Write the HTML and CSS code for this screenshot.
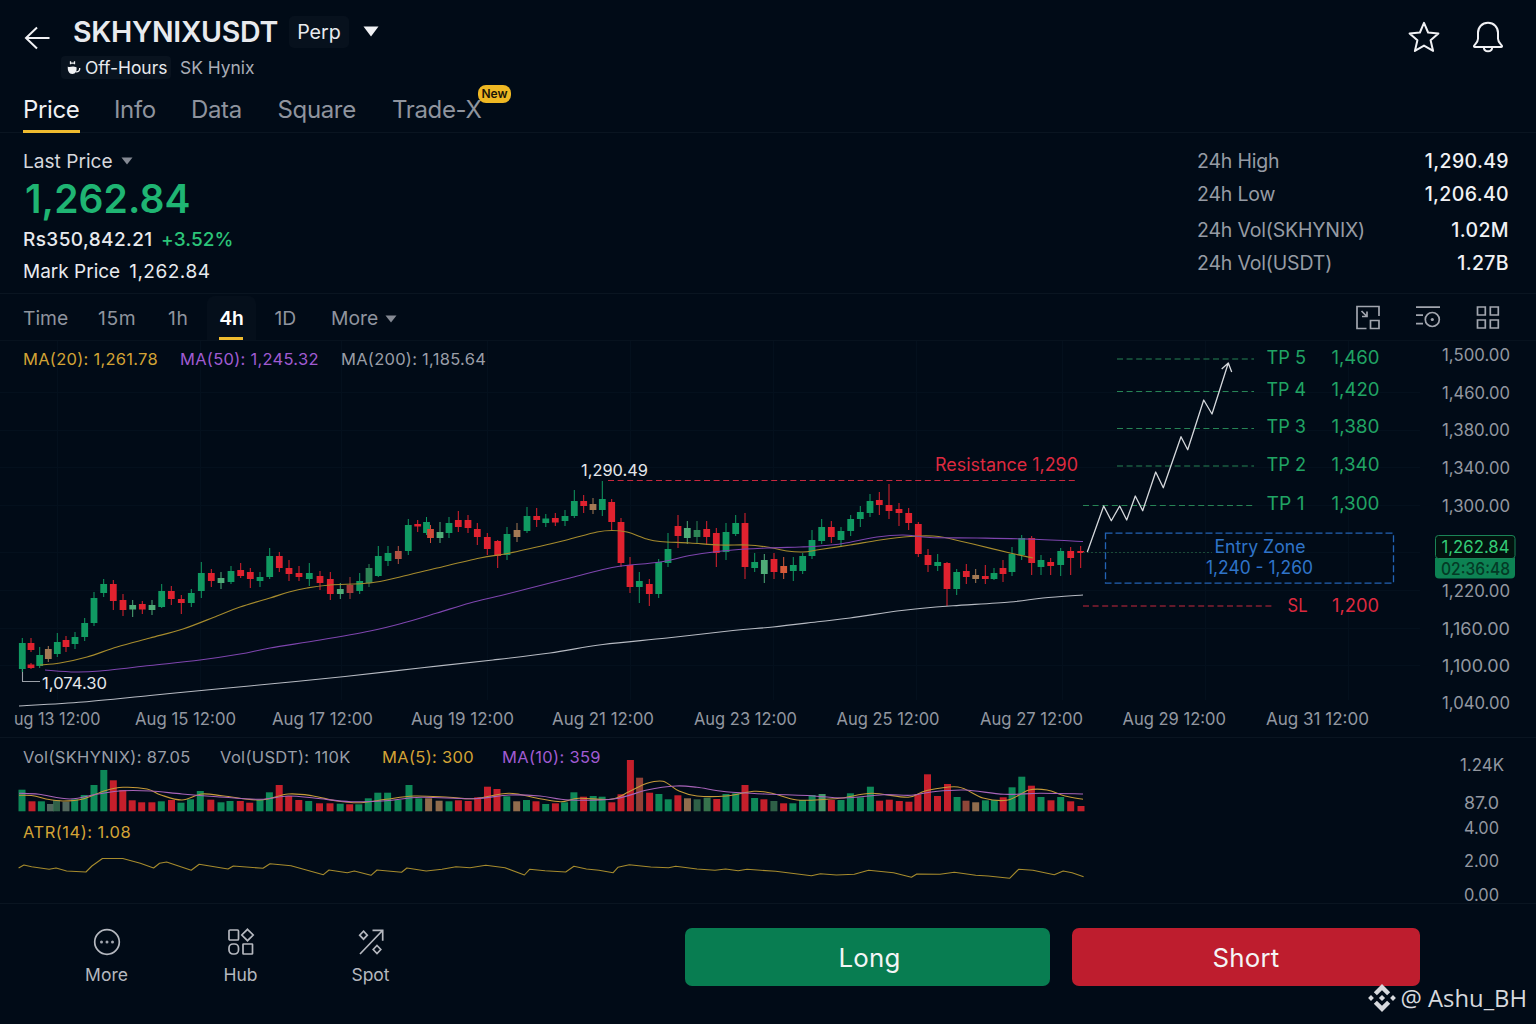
FILE: index.html
```html
<!DOCTYPE html>
<html lang="en">
<head>
<meta charset="utf-8">
<title>SKHYNIXUSDT Perp</title>
<link rel="stylesheet" href="styles.css">
</head>
<body>
<header class="header">
  <svg class="back" width="26" height="24" viewBox="0 0 26 24"><path d="M13 1.500 2 12l11 10.500M2 12h23.500"/></svg>
  <div class="pair">
    <div class="pair-main">
      <h1 class="symbol">SKHYNIXUSDT</h1>
      <span class="perp">Perp</span>
      <svg class="caret" width="16" height="11" viewBox="0 0 16 11"><path d="M.5.5h15L8 10.500z"/></svg>
    </div>
    <div class="pair-sub">
      <span class="session">
        <svg width="14" height="15" viewBox="0 0 14 15"><path class="cup" d="M.8 6.500c2 1.500 4.200-1 8.700.8.500 4-1 6.700-4.200 6.700S.4 10.600.8 6.500z"/><path class="cup-line" d="M9 11.800c2.300.2 4-1.300 3.700-3.800M3.500 1.200v3M7.500 1.200v3M3.500 3.200h4"/></svg>
        <span>Off-Hours</span>
      </span>
      <span class="company">SK Hynix</span>
    </div>
  </div>
  <div class="header-actions">
    <svg width="32" height="32" viewBox="0 0 32 32"><path d="m16 1.800 4.100 9.700 10.300.9-7.800 6.900 2.500 10.600L16 24.600l-9.100 5.300 2.500-10.600-7.800-6.900 10.300-.9z"/></svg>
    <svg width="32" height="32" viewBox="0 0 32 32"><path d="M16 1.800c-6 0-10 4.400-10 10v6c0 3-2.300 4.800-3.800 6.900-.5.700-.2 1.300.7 1.300h26.200c.9 0 1.200-.6.7-1.300-1.500-2.100-3.800-3.900-3.800-6.900v-6c0-5.600-4-10-10-10zM11.800 26.500c.4 5 8 5 8.400 0"/></svg>
  </div>
</header>

<nav class="tabs">
  <a class="tab active">Price</a><a class="tab">Info</a><a class="tab">Data</a><a class="tab">Square</a>
  <a class="tab tradex">Trade-X<span class="badge">New</span></a>
</nav>

<section class="summary">
  <div class="price">
    <div class="last-label">Last Price <svg width="12" height="8" viewBox="0 0 12 8"><path d="M.5.5h11L6 7.500z"/></svg></div>
    <div class="last">1,262.84</div>
    <div class="fiat"><span>Rs350,842.21</span><span class="change">+3.52%</span></div>
    <div class="mark"><span>Mark Price</span><span class="num">1,262.84</span></div>
  </div>
  <dl class="stats">
    <dt>24h High</dt><dd>1,290.49</dd>
    <dt>24h Low</dt><dd>1,206.40</dd>
    <dt>24h Vol(SKHYNIX)</dt><dd>1.02M</dd>
    <dt>24h Vol(USDT)</dt><dd>1.27B</dd>
  </dl>
</section>

<nav class="intervals">
  <div class="interval-list">
    <a>Time</a><a class="wide">15m</a><a class="wide">1h</a><a class="on">4h</a><a>1D</a>
    <a class="more">More <svg width="12" height="8" viewBox="0 0 12 8"><path d="M.5.5h11L6 7.500z"/></svg></a>
  </div>
  <div class="tools">
    <svg width="26" height="26" viewBox="0 0 26 26"><path d="M24 11V1.500H2v22h9.500M15.500 15.500H24v8h-8.500zM6.500 6l5.500 5.500M12 6.500v5H7"/></svg>
    <svg width="26" height="26" viewBox="0 0 26 26"><path d="M1 2.200h24M1 10.200h7M1 18.700h7"/><circle cx="17.300" cy="14.500" r="7"/><circle class="dot" cx="17.300" cy="14.500" r="1.600"/></svg>
    <svg width="26" height="26" viewBox="0 0 26 26"><path d="M2.500 2h7.800v8H2.500zM15.300 2h8v8h-8zM2.500 15h7.800v8H2.500zM15.300 15h8v8h-8z"/></svg>
  </div>
</nav>

<section class="panel main-chart">
  <svg id="chart" width="1536" height="397" viewBox="0 341 1536 397"></svg>
  <div class="legend">
    <span class="y">MA(20): 1,261.78</span><span class="p">MA(50): 1,245.32</span><span>MA(200): 1,185.64</span>
  </div>
</section>

<section class="panel sub-chart">
  <svg id="sub" width="1536" height="165" viewBox="0 738 1536 165"></svg>
  <div class="legend vol-legend">
    <span>Vol(SKHYNIX): 87.05</span><span>Vol(USDT): 110K</span><span class="y">MA(5): 300</span><span class="p">MA(10): 359</span>
  </div>
  <div class="legend atr-legend"><span class="y">ATR(14): 1.08</span></div>
</section>

<footer class="footer">
  <nav class="shortcuts">
    <a><svg width="28" height="28" viewBox="0 0 28 28"><circle cx="14" cy="14" r="12.300"/><circle class="dot" cx="8.500" cy="14" r="1.500"/><circle class="dot" cx="14" cy="14" r="1.500"/><circle class="dot" cx="19.500" cy="14" r="1.500"/></svg>More</a>
    <a><svg width="28" height="28" viewBox="0 0 28 28"><rect x="2" y="2" width="9.500" height="10" rx="1"/><path d="m20.500 1.300 5.700 5.700-5.700 5.700L14.800 7z"/><rect x="2" y="16" width="9.500" height="10" rx="4"/><rect x="16" y="16" width="9.500" height="10" rx=".5"/></svg>Hub</a>
    <a><svg width="28" height="28" viewBox="0 0 28 28"><path d="M3 26 25.500 2.500M15.500 2.300h10.200v10.500M6.500 3.200l3.800 4-3.800 4-3.800-4zM20 17.500l3.800 4-3.800 4-3.800-4z"/></svg>Spot</a>
  </nav>
  <button class="btn long">Long</button>
  <button class="btn short">Short</button>
  <div class="credit">
    <svg width="28" height="28" viewBox="0 0 28 28"><path d="m14 0 8.200 8.200-3.100 3.100L14 6.200l-5.100 5.100-3.100-3.100zM14 28l8.200-8.200-3.100-3.100-5.100 5.100-5.100-5.100-3.100 3.100zM14 10.900l3.100 3.100-3.100 3.100-3.100-3.100zM3 11.100 5.900 14 3 16.900.1 14zM25 11.100l2.900 2.900-2.900 2.900-2.900-2.900z"/></svg>
    <span>@ Ashu_BH</span>
  </div>
</footer>
<script src="chart.js"></script>
</body>
</html>
```
FILE: styles.css
```css
* { box-sizing: border-box; }
body {
  margin: 0;
  width: 1536px;
  height: 1024px;
  overflow: hidden;
  display: flex;
  flex-direction: column;
  background: #010b17;
  color: #e8eaee;
  font-family: Inter, "Liberation Sans", sans-serif;
}
svg { display: block; flex: none; }
a { color: inherit; text-decoration: none; }

.header { height: 84px; display: flex; padding: 14px 32px 0 24px; }
.back { margin-top: 12px; fill: none; stroke: #f0f1f4; stroke-width: 2; }
.pair { margin-left: 11px; }
.pair-main { display: flex; align-items: center; height: 35px; padding-left: 12px; }
.symbol { margin: 0; width: 216px; font-size: 28.500px; line-height: 35px; font-weight: 600; letter-spacing: -.3px; white-space: nowrap; }
.perp { width: 60px; height: 32px; line-height: 32px; margin-top: 1px; border-radius: 5px; background: #07111d; font-size: 19.700px; text-align: center; }
.caret { margin-left: 14px; fill: #f0f1f4; }
.pair-sub { display: flex; align-items: center; margin-top: 7px; height: 23px; font-size: 17.400px; }
.session { display: flex; align-items: center; gap: 4px; width: 110px; height: 23px; padding-left: 6px; background: #09131f; border-radius: 4px; white-space: nowrap; }
.cup { fill: #f0f1f4; }
.cup-line { fill: none; stroke: #f0f1f4; stroke-width: 1.300; }
.company { margin-left: 9px; color: #a9adb6; }
.header-actions { margin-left: auto; display: flex; gap: 32px; margin-top: 7px; fill: none; stroke: #f0f1f4; stroke-width: 2; stroke-linejoin: round; }

.tabs { height: 49px; flex: none; display: grid; grid-template-columns: 91px 77px 86.500px 114.500px 100px; justify-content: start; padding-left: 23px; border-bottom: 1px solid #0a1521; font-size: 24px; letter-spacing: -.35px; line-height: 51px; color: #8f949e; }
.tab { justify-self: start; height: 49px; white-space: nowrap; }
.active { color: #f0f1f4; border-bottom: 3px solid #efbb2f; }
.tradex { position: relative; }
.badge { position: absolute; left: 86px; top: 1px; width: 33px; height: 18px; border-radius: 8px; background: #efb823; color: #1b1508; font-size: 12px; letter-spacing: 0; line-height: 18px; font-weight: 600; text-align: center; }

.summary { height: 161px; flex: none; display: flex; justify-content: space-between; padding: 14px 27px 0 23px; border-bottom: 1px solid #0a1521; }
.last-label { display: flex; align-items: center; gap: 8px; height: 28px; font-size: 19.100px; color: #d6d8dd; }
.last-label svg, .more svg { fill: #858a94; }
.last { height: 48px; padding-left: 2px; line-height: 47px; font-size: 39px; font-weight: 600; color: #1fb573; letter-spacing: .1px; }
.fiat { display: flex; gap: 8.500px; height: 33px; line-height: 34px; font-size: 19px; font-weight: 500; letter-spacing: .4px; }
.change { color: #2cc479; letter-spacing: .1px; }
.mark { display: flex; gap: 9px; height: 32px; line-height: 32px; font-size: 19px; }
.num { letter-spacing: .5px; }
.stats { margin: 0; width: 312px; display: grid; grid-template-columns: auto auto; grid-template-rows: 28px 38px 33px 34px; align-items: center; font-size: 19.500px; }
.stats dt { color: #969ba4; letter-spacing: -.18px; }
.stats dd { margin: 0; text-align: right; font-weight: 500; color: #f0f1f4; letter-spacing: .35px; }

.intervals { height: 47px; flex: none; display: flex; justify-content: space-between; padding: 2px 35px 0 23px; border-bottom: 1px solid #07121e; font-size: 19.300px; line-height: 45px; color: #8f949e; }
.interval-list { display: grid; grid-template-columns: 75px 70px 39px 67.500px 56.500px 80px; }
.interval-list .wide { letter-spacing: .6px; }
.interval-list .on { width: 49px; height: 44px; text-align: center; color: #fff; font-weight: 600; background: linear-gradient(#efbb2f, #efbb2f) 12px 41px / 24px 3px no-repeat #050f1b; border-radius: 8px 8px 0 0; }
.interval-list .more { display: flex; align-items: center; gap: 7px; }
.tools { display: flex; align-items: center; gap: 34px; fill: none; stroke: #a2a6af; stroke-width: 1.700; }
.dot { fill: #a2a6af; stroke: none; }

.panel { position: relative; flex: none; border-bottom: 1px solid #0a1521; }
.main-chart { height: 397px; }
.sub-chart { height: 166px; }
.legend { position: absolute; left: 23px; top: 6px; display: grid; grid-template-columns: 157px 161px 160px; font-size: 16.500px; letter-spacing: .28px; line-height: 24px; color: #9a9ea7; white-space: nowrap; }
.vol-legend { top: 7px; grid-template-columns: 197px 162px 120px 110px; letter-spacing: .33px; }
.atr-legend { top: 82px; letter-spacing: .5px; }
.y { color: #d3a335; }
.p { color: #a05bd2; }

.grid { stroke: #04101d; }
.wick { stroke-width: 1; }
.line { fill: none; stroke-width: 1.100; stroke-linejoin: round; }
.s-yellow { stroke: #a68b2d; }
.s-purple { stroke: #7e45ae; }
.s-white { stroke: #b6bac2; }
.s-path { stroke: #d5d8dc; stroke-width: 1.300; }
.s-low { stroke: #9ba0a8; }
.dash-green { stroke: #278455; stroke-dasharray: 6 3.600; }
.dash-red { stroke: #c8283f; stroke-dasharray: 6 3.600; }
.dash-price { stroke: #1a4a37; stroke-dasharray: 2 2; }
.entry { fill: none; stroke: #2363b5; stroke-width: 1.300; stroke-dasharray: 7 3; }
.axis { fill: #9297a0; font-size: 17px; }
.t-white { fill: #e4e6ea; font-size: 16.500px; }
.t-green { fill: #20a464; font-size: 18.500px; }
.t-red { fill: #dd293f; font-size: 18px; }
.t-blue { fill: #2f74c9; font-size: 18px; }
.t-now { fill: #34cc77; font-size: 17px; }
.t-count { fill: #043a26; font-size: 17px; font-weight: 500; }
.now-box { fill: #02130f; stroke: #1a8456; }
.now-fill { fill: #0d8253; }

.footer { position: relative; height: 120px; display: flex; padding: 23px 0 0 39.500px; }
.shortcuts { display: grid; grid-template-columns: 134px 134px 126px; width: 645.500px; padding-top: 1px; font-size: 17.500px; line-height: 24px; color: #b5b8bf; }
.shortcuts a { display: flex; flex-direction: column; align-items: center; gap: 7px; fill: none; stroke: #b5b8bf; stroke-width: 1.700; }
.btn { flex: none; height: 58px; margin-top: 1px; padding: 0; border: 0; border-radius: 7px; color: #f4f5f6; font: 400 25.800px Inter, sans-serif; letter-spacing: .2px; }
.long { width: 365px; padding-left: 4px; background: #087d51; }
.short { width: 348px; margin-left: 22px; background: #be1d2e; }
.credit { position: absolute; right: 9px; bottom: 10px; display: flex; align-items: center; gap: 5px; height: 32px; color: #d7d9dd; fill: #d7d9dd; font: 23.800px/32px "Open Sans", "Noto Sans", sans-serif; white-space: nowrap; }
```
FILE: chart.js
```js
const NS = 'http://www.w3.org/2000/svg';
const G = '#109a62', R = '#e0222f', L = '#4fac78', T = '#a47a55';

function add(parent, name, attrs, text) {
  const el = document.createElementNS(NS, name);
  for (const k in attrs) el.setAttribute(k, attrs[k]);
  if (text !== undefined) el.textContent = text;
  parent.appendChild(el);
  return el;
}

// Smooth path through points given as a flat x,y list.
function curve(n) {
  const p = [];
  for (let i = 0; i < n.length; i += 2) p.push([n[i], n[i + 1]]);
  let d = 'M' + p[0];
  for (let i = 0; i < p.length - 1; i++) {
    const a = p[i - 1] || p[i], b = p[i], c = p[i + 1], e = p[i + 2] || c;
    d += 'C' + [b[0] + (c[0] - a[0]) / 6, b[1] + (c[1] - a[1]) / 6, c[0] - (e[0] - b[0]) / 6, c[1] - (e[1] - b[1]) / 6, c[0], c[1]].join(' ');
  }
  return d;
}

function straight(n) {
  let d = '';
  for (let i = 0; i < n.length; i += 2) d += (i ? 'L' : 'M') + n[i] + ' ' + n[i + 1];
  return d;
}

function label(svg, cls, x, y, w, text) {
  add(svg, 'text', { class: cls, x, y, textLength: w, lengthAdjust: 'spacingAndGlyphs' }, text);
}

const chart = document.getElementById('chart');
const sub = document.getElementById('sub');

for (const x of [57, 200, 341, 487, 630, 773, 916, 1062, 1205, 1348]) add(chart, 'path', { class: 'grid', d: `M${x}.500 341V700` });
for (const y of [392, 430, 467, 505, 552, 590, 628, 665]) add(chart, 'path', { class: 'grid', d: `M0 ${y}.500H1420` });

add(chart, 'path', { class: 'line s-low', d: 'M22.500 668V681.500H40' });

// x, high, body top, body bottom, low, colour
const candles = [
  [22.3,638,643,669,672,G],[31,638,643,650,652,R],[31,663,664.5,668,669,R],[39.7,647,655,666,668,G],[48.3,646,649,659,662,T],
  [57.3,633,642,654,657,G],[66,636,640,647,652,R],[75,632,637,644,649,G],[84.7,618,623,637,641,G],[94,592,598,623,626,G],
  [103.7,579,584,593,597,G],[113.3,580,584,601,610,R],[123,594,600,610,616,R],[132.7,600,605,609.5,617,L],[142.3,601,604,609.5,614,R],
  [152,600,605,610,615,L],[161.7,584,591,607,608,G],[171.3,586,591,599,605,R],[181.3,595,599,603,614,R],[191.3,589,593,603,607,G],
  [201.3,562,573,591,598,G],[211.3,569,573,581,587,R],[221,572,578,583,589,L],[231,566,571,582,584,G],[240.7,563,570,576,578,R],
  [250.3,568,572,579,588,R],[260,572,577,581,587,G],[269.7,548,556,577,579,G],[279.3,552,556,568,572,R],[289,560,568,574,581,R],
  [299,566,573,577,581,R],[309.3,563,573,579,586,G],[320,571,576,583,590,R],[330.3,572,579,594,600,R],[340.3,583,589,594,599,L],
  [350,577,585,593,599,'#a83a3a'],[359.7,573,581,591,594,G],[369,564,568,583,587,'#2d8456'],[378.3,546,556,576,577,G],[388,546,553,561,566,G],
  [398.3,546,551,559,564,'#b25344'],[408.3,519,525,551,555,G],[417.7,520,524,526.5,532,R],[426.5,517,522,533,535,G],[430.5,525,529,538,543,'#cf4a38'],
  [440,522,532,538,543,L],[449,517,523,533,538,G],[458.3,511,520,527,532,R],[468,515,520,528,533,R],[477.3,523,529,537,545,R],
  [487.3,533,537,549,555,R],[497.7,540,541,556,568,R],[507,527,534,555,560,G],[517,523,530,537,542,T],[527,507,516,531,533,G],
  [536.7,508,516,520,527,R],[545.8,514,518.5,523,527,G],[555.3,513,518,522.5,526,R],[565,510,516,521,526,G],[574.3,490,501,516,518,G],
  [583.7,495,501,506,513,R],[593,498,504,510,514,T],[602.3,481,499,510,516,G],[611.7,499,502,522,530,R],[621,518,522,563,567,R],
  [630,557,565,587,593,R],[639.3,572,581,587,603,G],[649.3,579,584,594,606,R],[658.7,559,562,594,598,G],[668,533,549,563,567,G],
  [678,515,526,536,548,R],[687.3,521,528,538,544,L],[697,521,530,537,544,'#2d8456'],[706.7,521,529,537,545,R],[716.3,528,533,553,567,R],
  [726,523,532,552,560,G],[735.7,515,523,534,536,G],[745,513,523,567,579,R],[754.7,553,562,568,572,G],[764.3,554,560,574,583,L],
  [774,553,559,572,579,R],[783.7,557,566,573,579,'#d65a3a'],[793.3,557,565,571,581,G],[802.7,553,556,571,574,G],[812,530,540,556,559,G],
  [821.7,519,527,541,544,G],[831.3,521,527,537,543,R],[841,527,531,540,547,G],[850.7,515,519,531,536,G],[860.3,506,512,519,527,G],
  [870,494,501,513,517,G],[879.3,492,500,505,515,R],[889,484,505,511,519,R],[899,503,509,513,526,R],[908.7,508,513,523,530,R],
  [918.3,522,524,554,557,R],[928,549,555,565,572,R],[937.7,554,562,566,571,G],[947,562,563,589,606,R],[956.7,569,572,589,595,G],
  [966.3,564,571,577,584,R],[975.7,569,575,579,583,T],[985.3,565,576,579,584,R],[994,568,573,579,580,G],[1003,560,568,574,582,R],
  [1012,547,554,572,576,G],[1021.7,535,538,555,560,G],[1031.7,536,538,563,575,R],[1041,555,560,567,575,G],[1050.7,558,562,566,575,R],
  [1060.7,548,551,565,576,G],[1070.7,547,551,558,575,R],[1080.7,546,551,553,568,R]
];
for (const [x, hi, t, b, lo, c] of candles) {
  add(chart, 'path', { class: 'wick', stroke: c, d: `M${x} ${hi}V${lo}` });
  add(chart, 'rect', { x: x - 3.4, y: t, width: 6.8, height: b - t, fill: c });
}

add(chart, 'path', { class: 'line s-yellow', d: curve([40,665,60,663,87,657,117,647,150,638,183,629,217,616,240,607,270,598,289,592,307,588,330,585,370,583,400,577,437,568,480,558,510,553,550,544,570,539,597,532,612,530.5,627,532,647,539,660,541.5,690,543,720,545,747,545,767,547,787,551,803,552,820,549.5,850,545,880,540,910,536.5,933,536,947,538,977,545,1010,553,1033,558]) });
add(chart, 'path', { class: 'line s-purple', d: curve([45,670,75,672,100,671,150,665.5,200,660,240,654,270,648,320,640,370,631,403,623,437,613,470,603,503,595,550,583,570,578,597,571,621,566,660,562,693,555,733,550,767,548,800,547,820,546,843,543.5,877,537,903,535,930,537.5,977,538,1027,539,1083,541.5]) });
add(chart, 'path', { class: 'line s-white', d: curve([19,706,83,702,150,695.5,217,689,280,683,345,676.5,420,668,493,660,550,653,603,644.5,667,638,733,630.5,773,627,820,621.5,850,618,897,611,920,608.5,953,605.8,1010,602,1043,598,1083,595]) });

function dash(cls, x1, y, x2) { add(chart, 'path', { class: cls, d: `M${x1} ${y}H${x2}` }); }
dash('dash-red', 608, 480.5, 1078);
dash('dash-green', 1117, 359, 1254);
dash('dash-green', 1117, 391.5, 1254);
dash('dash-green', 1117, 428.5, 1254);
dash('dash-green', 1117, 466, 1254);
dash('dash-green', 1083, 505.5, 1254);
dash('dash-red', 1083, 606, 1275);
dash('dash-price', 1083, 552.5, 1212);
add(chart, 'rect', { class: 'entry', x: 1105.5, y: 533.2, width: 288, height: 50 });
add(chart, 'path', { class: 'line s-path', d: straight([1087.3,552,1103.7,506,1111.3,520.7,1119.7,506,1126.7,520,1135.3,496,1142.7,510.7,1155.7,472,1163.3,487.7,1181,436.7,1187.7,449.7,1203.7,400,1212,414,1228.3,363]) + 'M1221.700 369L1228.300 363L1231.700 372' });

label(chart, 't-white', 42, 688.5, 65, '1,074.30');
label(chart, 't-white', 581, 476, 67, '1,290.49');
label(chart, 't-red', 935, 470.5, 143, 'Resistance 1,290');
[['5','1,460',363.5],['4','1,420',396],['3','1,380',432.5],['2','1,340',470.5],['1','1,300',510]].forEach(([n, v, y]) => {
  label(chart, 't-green', 1266.5, y, n === '1' ? 38 : 39.5, 'TP ' + n);
  label(chart, 't-green', 1331.5, y, 48, v);
});
label(chart, 't-red', 1287.5, 612, 20, 'SL');
label(chart, 't-red', 1332, 612, 47, '1,200');
label(chart, 't-blue', 1214.5, 553.3, 91, 'Entry Zone');
label(chart, 't-blue', 1206, 573.5, 107, '1,240 - 1,260');

[['1,500.00',360.5],['1,460.00',398.5],['1,380.00',436],['1,340.00',473.5],['1,300.00',511.5],['1,220.00',596.5],['1,160.00',634.5],['1,100.00',671.5],['1,040.00',708.5]].forEach(([t, y]) => label(chart, 'axis', 1442, y, 68, t));
add(chart, 'path', { class: 'now-fill', d: 'M1435 558h80v16.500q0 4-4 4h-72q-4 0-4-4z' });
add(chart, 'rect', { class: 'now-box', x: 1435.5, y: 535.5, width: 79.5, height: 23, rx: 3 });
label(chart, 't-now', 1441.5, 552.5, 68, '1,262.84');
label(chart, 't-count', 1441, 574.5, 69, '02:36:48');

[[135,101,'15'],[272,101,'17'],[411,103,'19'],[552,102,'21'],[694,103,'23'],[836.5,103,'25'],[980,103,'27'],[1122.5,103.5,'29'],[1266,103,'31']].forEach(([x, w, d]) => label(chart, 'axis', x, 724.5, w, `Aug ${d} 12:00`));
label(chart, 'axis', 14, 724.5, 86.5, 'ug 13 12:00');

// Volume bars: x, top, colour
const DG = '#356c4e', GY = '#5d7468';
const bars = [
  [22,789.7,G],[32,801.3,R],[41.4,801.3,G],[50.5,804,GY],[56.5,800,DG],[66,801.7,GY],[74.7,799.3,G],[84.2,795,G],[94,785,G],[103.8,770,G],
  [113.3,780.3,R],[122.8,790,R],[132.2,800.3,R],[141.7,802.3,R],[151.9,802.3,R],[161.3,801.3,G],[171.5,800,R],[181,802.7,G],[190.5,799.3,G],[200.3,791,G],
  [210.8,799.7,R],[221,802.3,G],[230,801,G],[240.3,801,R],[249.7,802.7,R],[260,800,G],[269.4,792.3,G],[279.2,785,R],[288.7,796,R],[298.8,800,R],
  [308.7,801,G],[319.5,803.3,R],[330,803.3,R],[340.2,803.7,G],[349.7,804.3,R],[358.8,804.3,G],[368.3,798.3,G],[377.8,792.7,G],[387.6,792.7,G],[398,800,G],
  [409,785,G],[418.8,798.3,G],[428.6,798.3,T],[439.1,800.7,T],[449,801.3,G],[458.4,800.3,R],[468.2,801,R],[477.7,797.3,R],[487.5,786.7,R],[497,789,R],
  [506.8,796.3,G],[516.7,801.3,T],[526.5,800,G],[536,801.3,R],[545.7,804,G],[555.4,803.3,R],[564.6,802.3,G],[573.9,792.3,G],[583.6,796.7,R],[593.2,796,G],
  [602.1,796.7,G],[611.8,802.3,R],[621,794.3,R],[630.4,760,R],[639.6,777.7,'#a5483b'],[649.6,792.7,R],[658.9,794,G],[668.2,799.3,G],[677.9,795.3,R],[687.5,798.3,T],
  [697.1,799.3,DG],[707.1,797.7,'#3d8254'],[716.8,799,R],[726,794,G],[735.7,793.3,G],[745,785,R],[754.6,798,G],[763.9,799.3,R],[773.9,801,DG],[783.6,803.3,R],
  [792.9,803.3,G],[802.5,800,G],[812.1,795,G],[822.1,794,L],[831.4,800,R],[841,800,G],[850.4,793.3,G],[860.4,797.3,G],[870.4,786.7,G],[879.6,800.7,R],
  [889.3,799.7,R],[899.3,801,R],[908.9,801.7,R],[917.9,794.3,R],[927.5,774.3,R],[937.5,796,R],[947.5,784,R],[957.1,797,G],[966,800.7,'#a3503f'],[975.7,802.3,T],
  [985.4,800.3,G],[994.3,800,G],[1003.2,797.3,R],[1012.1,787.3,G],[1021.8,776.7,G],[1031.4,785.7,R],[1041,797,G],[1051,800.3,R],[1060.7,797,G],[1070.7,801.3,R],[1081,806,R]
];
for (const [x, t, c] of bars) add(sub, 'rect', { x: x - 3.5, y: t, width: 7, height: 811.3 - t, fill: c, opacity: 0.88 });

add(sub, 'path', { class: 'line s-yellow', style: 'stroke:#c69a38', d: curve([19,795.3,33,795.7,46,799,63,801,84,798.7,105,790.7,123,787.3,147,789,161,795,182,800,202,794,224,796,260,800,288,794,312,795.7,337,801,361,802.7,386,799.3,414,796,449,797.3,474,798.7,509,793.3,540,798.7,561,801.7,579,798.3,611,799.3,629,791.7,647,783.3,663,781.3,679,791,697,796,726,796,754,791.3,772,793.3,797,800,826,799.3,844,797.7,872,793.3,908,797.3,926,790.7,958,787,983,798,1008,800,1029,790,1047,790,1065,796,1083,799.3]) });
add(sub, 'path', { class: 'line s-purple', style: 'stroke:#a864ba', d: curve([19,793.3,39,794.3,70,799,98,794,123,790.7,151,791,182,794,217,796.7,260,799.3,288,796,316,798.3,351,801.7,386,800.7,421,797.3,474,798.7,509,795,540,796,569,800,615,798.7,647,790,676,786,697,787.3,726,791.7,772,794.3,811,795.7,844,798,883,794.7,911,795.3,933,791.7,965,790,1004,794.3,1040,793.3,1083,794]) });

add(sub, 'path', { class: 'line s-yellow', d: straight([18.6,868,23.9,865,31.6,866.7,49.1,869.3,56.1,868,66.6,871,85.9,872,91.9,866,102.4,858.5,122.8,858.5,140.3,863.3,153.6,868,159.6,863.3,166.6,862,191.2,870.3,199.2,864.3,228,869,233.3,866,263,868.3,270,863.7,291,865.7,323.4,874.7,329,870,347.3,872.7,354.3,871,371,875.3,377,870,401.6,872.3,406.9,868,426.2,871,442,869.3,456,866.7,470,867.7,485.8,865.3,505,867.7,524.4,875,529.6,869.3,545,870.7,565.7,872,573.9,866.3,586.4,869,599,870.3,613.2,872.7,617.9,867.3,629.3,864.7,650.7,867,668.6,867.7,675.7,866.3,697,869,715,870.3,725.7,869,738.2,870.7,747,869.3,775.7,871.3,811.4,875.7,820.4,873.7,836.4,875,854.3,874.3,868.6,870.3,893.6,872.7,911.4,877.3,916.8,874,940,874.3,954.3,872.3,975.7,875.3,988.2,876,1009.6,878.3,1018.6,869.3,1032.9,870.3,1054.3,874.7,1063.2,871,1072.1,872.7,1083.6,876.7]) });

[['1.24K',1460,44,771],['87.0',1464,35,808.5],['4.00',1464,35,834],['2.00',1464,35,866.5],['0.00',1464,35,900.5]].forEach(([t, x, w, y]) => label(sub, 'axis', x, y, w, t));
```
